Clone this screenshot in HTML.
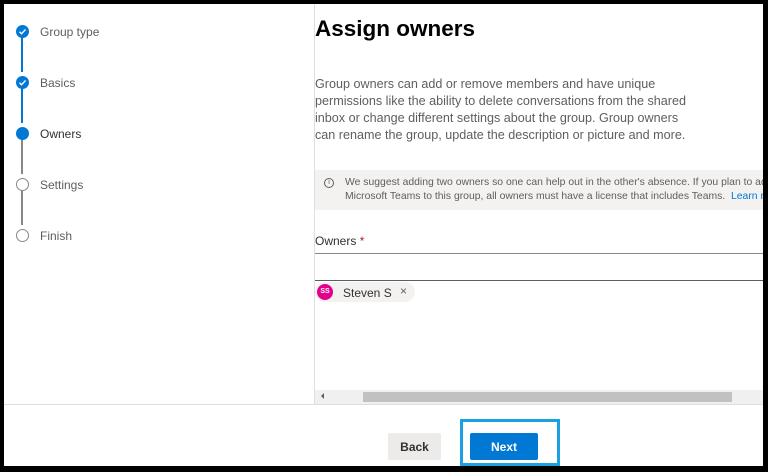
<!DOCTYPE html>
<html><head><style>
*{margin:0;padding:0;box-sizing:border-box}
body{width:768px;height:472px;background:#000;position:relative;overflow:hidden;font-family:"Liberation Sans",sans-serif;color:#323130}
#w{position:absolute;left:4px;top:4px;width:759px;height:462px;background:#fff;overflow:hidden}
.a{position:absolute}
.step{position:absolute;left:36px;font-size:12px;color:#605e5c}
.dot{position:absolute;left:12px;width:13px;height:13px;border-radius:50%}
</style></head><body>
<div id="w">
<div class="a" style="left:17px;top:33px;width:2px;height:35px;background:#0078d4"></div>
<div class="a" style="left:17px;top:84px;width:2px;height:35px;background:#0078d4"></div>
<div class="a" style="left:17px;top:135px;width:2px;height:35px;background:#8a8886"></div>
<div class="a" style="left:17px;top:186px;width:2px;height:35px;background:#8a8886"></div>
<div class="dot" style="top:21px;background:#0078d4"><svg width="13" height="13" viewBox="0 0 13 13"><path d="M3.5 6.8l2 2 4-4.3" stroke="#fff" stroke-width="1.4" fill="none"/></svg></div>
<div class="dot" style="top:72px;background:#0078d4"><svg width="13" height="13" viewBox="0 0 13 13"><path d="M3.5 6.8l2 2 4-4.3" stroke="#fff" stroke-width="1.4" fill="none"/></svg></div>
<div class="dot" style="top:123px;background:#0078d4"></div>
<div class="dot" style="top:174px;border:1.5px solid #8a8886;background:#fff"></div>
<div class="dot" style="top:225px;border:1.5px solid #8a8886;background:#fff"></div>
<div class="step" style="top:21px">Group type</div>
<div class="step" style="top:72px">Basics</div>
<div class="step" style="top:123px;color:#323130">Owners</div>
<div class="step" style="top:174px">Settings</div>
<div class="step" style="top:225px">Finish</div>
<div class="a" style="left:310px;top:0;width:1px;height:400px;background:#e1dfdd"></div>
<div class="a" style="left:0;top:400px;width:759px;height:1px;background:#e1dfdd"></div>
<div class="a" style="left:311px;top:12px;font-size:22.5px;font-weight:bold;color:#000">Assign owners</div>
<div class="a" style="left:311px;top:72px;width:372px;font-size:12.6px;line-height:17px;color:#605e5c">Group owners can add or remove members and have unique permissions like the ability to delete conversations from the shared inbox or change different settings about the group. Group owners can rename the group, update the description or picture and more.</div>
<div class="a" style="left:311px;top:166px;width:460px;height:40px;background:#f3f2f1"></div>
<div class="a" style="left:320px;top:174px;width:10px;height:10px;border:1px solid #605e5c;border-radius:50%;font-size:7px;text-align:center;line-height:8px;color:#605e5c">i</div>
<div class="a" style="left:341px;top:172px;font-size:10.4px;line-height:14px;color:#605e5c;white-space:nowrap">We suggest adding two owners so one can help out in the other's absence. If you plan to add<br>Microsoft Teams to this group, all owners must have a license that includes Teams. &nbsp;<span style="color:#0078d4">Learn more</span></div>
<div class="a" style="left:311px;top:230px;font-size:12px;color:#323130">Owners <span style="color:#a4262c">*</span></div>
<div class="a" style="left:311px;top:249px;width:448px;height:1px;background:#8a8886"></div>
<div class="a" style="left:311px;top:276px;width:448px;height:1px;background:#605e5c"></div>
<div class="a" style="left:311px;top:278px;width:100px;height:20px;border-radius:10px;background:#f3f2f1"></div>
<div class="a" style="left:313px;top:280px;width:16px;height:16px;border-radius:50%;background:#e3008c;color:#fff;font-size:7px;font-weight:bold;text-align:center;line-height:16px">SS</div>
<div class="a" style="left:339px;top:282px;font-size:12px;color:#323130">Steven S</div>
<div class="a" style="left:396px;top:280px;font-size:12px;color:#605e5c">×</div>
<div class="a" style="left:311px;top:386px;width:448px;height:14px;background:#f0f0f0"></div>
<div class="a" style="left:359px;top:388px;width:369px;height:10px;background:#c1c1c1"></div>
<div class="a" style="left:317px;top:389px;width:0;height:0;border-top:3px solid transparent;border-bottom:3px solid transparent;border-right:3px solid #606060"></div>
<div class="a" style="left:384px;top:429px;width:53px;height:27px;background:#edebe9;border-radius:2px;font-size:12px;font-weight:bold;text-align:center;line-height:28px;color:#323130">Back</div>
<div class="a" style="left:456px;top:415px;width:100px;height:47px;border:3px solid #1ba1e2"></div>
<div class="a" style="left:466px;top:429px;width:68px;height:27px;background:#0078d4;border-radius:2px;font-size:12px;font-weight:bold;text-align:center;line-height:28px;color:#fff">Next</div>
</div>
</body></html>
